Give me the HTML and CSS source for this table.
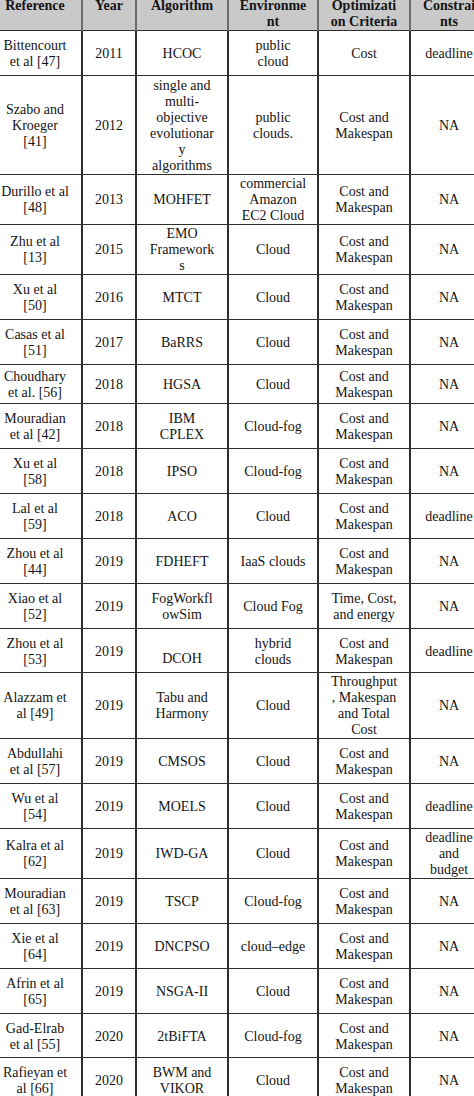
FILE: index.html
```html
<!DOCTYPE html>
<html lang="en">
<head>
<meta charset="utf-8">
<title>Workflow scheduling comparison</title>
<link rel="stylesheet" href="styles.css">
</head>
<body>
<table class="survey">
  <colgroup>
    <col class="c-ref"><col class="c-year"><col class="c-alg"><col class="c-env"><col class="c-opt"><col class="c-con">
  </colgroup>
  <thead>
    <tr class="head">
      <th>Reference</th>
      <th>Year</th>
      <th>Algorithm</th>
      <th>Environme<br>nt</th>
      <th>Optimizati<br>on Criteria</th>
      <th>Constrai<br>nts</th>
    </tr>
  </thead>
  <tbody>
    <tr><td>Bittencourt<br>et al [47]</td><td>2011</td><td>HCOC</td><td>public<br>cloud</td><td>Cost</td><td>deadline</td></tr>
    <tr class="h99"><td>Szabo and<br>Kroeger<br>[41]</td><td>2012</td><td>single and<br>multi-<br>objective<br>evolutionar<br>y<br>algorithms</td><td>public<br>clouds.</td><td>Cost and<br>Makespan</td><td>NA</td></tr>
    <tr class="h50"><td>Durillo et al<br>[48]</td><td>2013</td><td>MOHFET</td><td>commercial<br>Amazon<br>EC2 Cloud</td><td>Cost and<br>Makespan</td><td>NA</td></tr>
    <tr class="h50"><td>Zhu et al<br>[13]</td><td>2015</td><td>EMO<br>Framework<br>s</td><td>Cloud</td><td>Cost and<br>Makespan</td><td>NA</td></tr>
    <tr><td>Xu et al<br>[50]</td><td>2016</td><td>MTCT</td><td>Cloud</td><td>Cost and<br>Makespan</td><td>NA</td></tr>
    <tr><td>Casas et al<br>[51]</td><td>2017</td><td>BaRRS</td><td>Cloud</td><td>Cost and<br>Makespan</td><td>NA</td></tr>
    <tr class="h39"><td>Choudhary<br>et al. [56]</td><td>2018</td><td>HGSA</td><td>Cloud</td><td>Cost and<br>Makespan</td><td>NA</td></tr>
    <tr><td>Mouradian<br>et al [42]</td><td>2018</td><td>IBM<br>CPLEX</td><td>Cloud-fog</td><td>Cost and<br>Makespan</td><td>NA</td></tr>
    <tr><td>Xu et al<br>[58]</td><td>2018</td><td>IPSO</td><td>Cloud-fog</td><td>Cost and<br>Makespan</td><td>NA</td></tr>
    <tr><td>Lal et al<br>[59]</td><td>2018</td><td>ACO</td><td>Cloud</td><td>Cost and<br>Makespan</td><td>deadline</td></tr>
    <tr><td>Zhou et al<br>[44]</td><td>2019</td><td>FDHEFT</td><td>IaaS clouds</td><td>Cost and<br>Makespan</td><td>NA</td></tr>
    <tr><td>Xiao et al<br>[52]</td><td>2019</td><td>FogWorkfl<br>owSim</td><td>Cloud Fog</td><td>Time, Cost,<br>and energy</td><td>NA</td></tr>
    <tr class="h44"><td>Zhou et al<br>[53]</td><td>2019</td><td class="low">DCOH</td><td>hybrid<br>clouds</td><td>Cost and<br>Makespan</td><td>deadline</td></tr>
    <tr class="h66"><td>Alazzam et<br>al [49]</td><td>2019</td><td>Tabu and<br>Harmony</td><td>Cloud</td><td>Throughput<br>, Makespan<br>and Total<br>Cost</td><td>NA</td></tr>
    <tr><td>Abdullahi<br>et al [57]</td><td>2019</td><td>CMSOS</td><td>Cloud</td><td>Cost and<br>Makespan</td><td>NA</td></tr>
    <tr><td>Wu et al<br>[54]</td><td>2019</td><td>MOELS</td><td>Cloud</td><td>Cost and<br>Makespan</td><td>deadline</td></tr>
    <tr class="h50"><td>Kalra et al<br>[62]</td><td>2019</td><td>IWD-GA</td><td>Cloud</td><td>Cost and<br>Makespan</td><td>deadline<br>and<br>budget</td></tr>
    <tr><td>Mouradian<br>et al [63]</td><td>2019</td><td>TSCP</td><td>Cloud-fog</td><td>Cost and<br>Makespan</td><td>NA</td></tr>
    <tr><td>Xie et al<br>[64]</td><td>2019</td><td>DNCPSO</td><td>cloud–edge</td><td>Cost and<br>Makespan</td><td>NA</td></tr>
    <tr><td>Afrin et al<br>[65]</td><td>2019</td><td>NSGA-II</td><td>Cloud</td><td>Cost and<br>Makespan</td><td>NA</td></tr>
    <tr class="h44"><td>Gad-Elrab<br>et al [55]</td><td>2020</td><td>2tBiFTA</td><td>Cloud-fog</td><td>Cost and<br>Makespan</td><td>NA</td></tr>
    <tr><td>Rafieyan et<br>al [66]</td><td>2020</td><td>BWM and<br>VIKOR</td><td>Cloud</td><td>Cost and<br>Makespan</td><td>NA</td></tr>
  </tbody>
</table>
</body>
</html>
```
FILE: styles.css
```css
html, body {
  margin: 0;
  padding: 0;
  overflow: hidden;
  background: #ffffff;
}

.survey {
  margin: -3px 0 0 -13px;
  width: 500px;
  table-layout: fixed;
  border-collapse: collapse;
  font-family: "Liberation Serif", "Times New Roman", serif;
  font-size: 14px;
  line-height: 16px;
  color: #141414;
}

.c-ref { width: 94px; }
.c-year { width: 54px; }
.c-alg { width: 92px; }
.c-env { width: 90px; }
.c-opt { width: 92px; }
.c-con { width: 78px; }

.survey th,
.survey td {
  padding: 0;
  text-align: center;
  border-left: 2px solid #2e2e2e;
  border-right: 2px solid #2e2e2e;
  border-top: 1px solid #2e2e2e;
  border-bottom: 1px solid #2e2e2e;
  overflow: hidden;
  white-space: nowrap;
}

.survey th {
  background: #c9c9c9;
  font-weight: bold;
  vertical-align: top;
  height: 32px;
  border-left-color: #6a6a6a;
  border-right-color: #6a6a6a;
}

.survey td {
  vertical-align: middle;
  height: 42px;
  padding-top: 2px;
}

.survey .h99 td { height: 96px; }
.survey .h50 td { height: 49px; padding-top: 0; }
.survey .h39 td { height: 36px; }
.survey .h44 td { height: 41px; }
.survey .h66 td { height: 65px; padding-top: 0; }

.survey td.low {
  padding-top: 16px;
  height: 27px;
}
```
